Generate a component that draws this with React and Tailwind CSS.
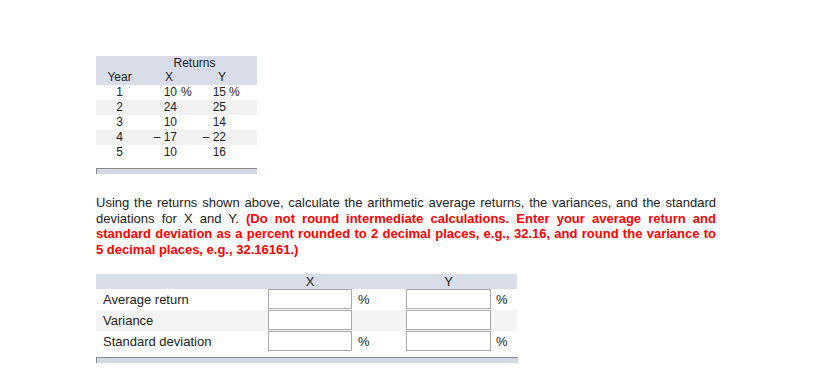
import React from 'react';

const returns = [
    { year: 1, x: '10', y: '15', pct: true },
    { year: 2, x: '24', y: '25' },
    { year: 3, x: '10', y: '14' },
    { year: 4, x: '\u2013 17', y: '\u2013 22' },
    { year: 5, x: '10', y: '16' },
];

const answers = [
    { label: 'Average return', pct: true },
    { label: 'Variance', pct: false },
    { label: 'Standard deviation', pct: true },
];

const font = { fontFamily: '"Liberation Sans", Arial, sans-serif' };

const ReturnsTable = () => (
    <div className="w-[161px] text-[12px] text-[#222] leading-[15px]">
        <div className="grid grid-cols-[44px_37px_22px_27px_31px] bg-[#d9dde8]">
            <div className="h-[14px]" />
            <div className="col-span-4 h-[14px] text-center pr-[8px] leading-[14px]">Returns</div>
            <div className="h-[15px] text-center pl-[3px]">Year</div>
            <div className="h-[15px] text-right pr-[4px]">X</div>
            <div />
            <div className="h-[15px] text-right">Y</div>
            <div />
        </div>
        {returns.map((r, i) => (
            <div
                key={r.year}
                className={`grid grid-cols-[44px_37px_22px_27px_31px] h-[15px] ${i % 2 === 1 ? 'bg-[#f2f2f2]' : 'bg-white'}`}
            >
                <div className="text-center pl-[3px]">{r.year}</div>
                <div className="text-right whitespace-pre">{r.x}</div>
                <div className="pl-[4px]">{r.pct ? '%' : ''}</div>
                <div className="text-right whitespace-pre">{r.y}</div>
                <div className="pl-[3px]">{r.pct ? '%' : ''}</div>
            </div>
        ))}
        <div className="mt-[8px] h-[6px] bg-[#d3d9e4] border-t border-l border-[#8a8a8a]" />
    </div>
);

const AnswerTable = () => (
    <div className="w-[421px] text-[13px] text-[#222]">
        <div className="grid grid-cols-[172px_84px_54px_85px_26px] h-[15px] leading-[15px] bg-[#d9dde8]">
            <div />
            <div className="text-center">X</div>
            <div />
            <div className="text-center">Y</div>
            <div />
        </div>
        {answers.map((a, i) => (
            <div
                key={a.label}
                className={`grid grid-cols-[172px_84px_54px_85px_26px] h-[21px] ${i === 1 ? 'bg-[#f4f4f4]' : 'bg-white'}`}
            >
                <div className="pl-[7px] leading-[21px]">{a.label}</div>
                <input className="h-[20px] w-[84px] border border-[#a9a9a9] bg-white outline-none" />
                <div className="pl-[6px] leading-[21px]">{a.pct ? '%' : ''}</div>
                <input className="h-[20px] w-[85px] border border-[#a9a9a9] bg-white outline-none" />
                <div className="pl-[5px] leading-[21px]">{a.pct ? '%' : ''}</div>
            </div>
        ))}
        <div className="mt-[5px] h-[6px] w-[422px] bg-[#d3d9e4] border-t border-l border-[#8a8a8a]" />
    </div>
);

export default function App() {
    return (
        <div className="w-[818px] h-[392px] bg-white pt-[56px] pl-[96px]" style={font}>
            <ReturnsTable />
            <p className="mt-[21px] w-[620px] text-[13px] leading-[15.5px] text-[#222] text-justify">
                Using the returns shown above, calculate the arithmetic average returns, the variances, and the standard
                deviations for X and Y.{' '}
                <span className="font-bold text-[#ff0000]">
                    (Do not round intermediate calculations. Enter your average return and standard deviation as a
                    percent rounded to 2 decimal places, e.g., 32.16, and round the variance to 5{'\u00a0'}decimal
                    places, e.g., 32.16161.)
                </span>
            </p>
            <div className="mt-[17px]">
                <AnswerTable />
            </div>
        </div>
    );
}
